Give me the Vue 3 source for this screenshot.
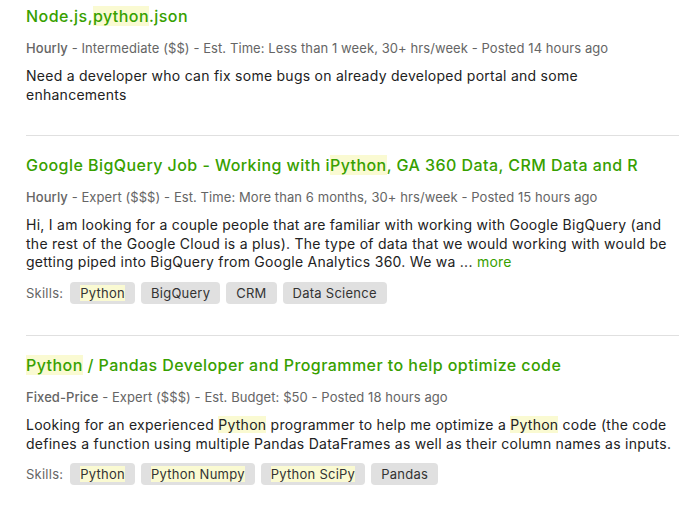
<script setup>
const jobs = [
  {
    title: [['Node.js,', false], ['python', true], ['.json', false]],
    type: 'Hourly',
    meta: ' - Intermediate ($$) - Est. Time: Less than 1 week, 30+ hrs/week - Posted 14 hours ago',
    desc: [['Need a developer who can fix some bugs on already developed portal and some enhancements', false]],
    skills: []
  },
  {
    title: [['Google BigQuery Job - Working with i', false], ['Python', true], [', GA 360 Data, CRM Data and R', false]],
    type: 'Hourly',
    meta: ' - Expert ($$$) - Est. Time: More than 6 months, 30+ hrs/week - Posted 15 hours ago',
    desc: [['Hi, I am looking for a couple people that are familiar with working with Google BigQuery (and the rest of the Google Cloud is a plus). The type of data that we would working with would be getting piped into BigQuery from Google Analytics 360. We wa ... ', false]],
    more: true,
    skills: [['Python', true], ['BigQuery', false], ['CRM', false], ['Data Science', false]]
  },
  {
    title: [['Python', true], [' / Pandas Developer and Programmer to help optimize code', false]],
    type: 'Fixed-Price',
    meta: ' - Expert ($$$) - Est. Budget: $50 - Posted 18 hours ago',
    desc: [['Looking for an experienced ', false], ['Python', true], [' programmer to help me optimize a ', false], ['Python', true], [' code (the code defines a function using multiple Pandas DataFrames as well as their column names as inputs.', false]],
    skills: [['Python', true], ['Python Numpy', true], ['Python SciPy', true], ['Pandas', false]]
  }
]
</script>

<template>
  <div class="list">
    <section v-for="(job, i) in jobs" :key="i" class="job">
      <h2 class="title"><template v-for="(p, k) in job.title" :key="k"><mark v-if="p[1]">{{ p[0] }}</mark><template v-else>{{ p[0] }}</template></template></h2>
      <p class="meta"><span class="type">{{ job.type }}</span>{{ job.meta }}</p>
      <p class="desc"><template v-for="(p, k) in job.desc" :key="k"><mark v-if="p[1]">{{ p[0] }}</mark><template v-else>{{ p[0] }}</template></template><a v-if="job.more" class="more">more</a></p>
      <div v-if="job.skills.length" class="skills">
        <span class="label">Skills:</span>
        <span v-for="(s, k) in job.skills" :key="k" class="tag"><mark v-if="s[1]">{{ s[0] }}</mark><template v-else>{{ s[0] }}</template></span>
      </div>
    </section>
  </div>
</template>

<style scoped>
.list { width: 653px; margin-left: 26px; font-family: Inter, "Open Sans", sans-serif; color: #37393a; }
.job { border-bottom: 1px solid #e0e0e0; padding-top: 5px; padding-bottom: 31px; margin-bottom: 13px; }
.job:last-child { border-bottom: 0; margin-bottom: 0; }
.title { margin: 0; font-size: 16px; line-height: 22px; font-weight: 500; color: #37a000; letter-spacing: 0.44px; }
mark { background: #fafad2; color: inherit; }
.meta { margin: 12px 0 0; font-size: 13px; line-height: 18px; color: #656565; letter-spacing: 0.08px; }
.type { font-weight: 500; }
.desc { margin: 10px 0 0; font-size: 14px; line-height: 18.6px; color: #222; letter-spacing: 0.26px; }
.more { color: #37a000; }
.skills { display: flex; align-items: center; gap: 6px; margin-top: 10px; font-size: 13px; letter-spacing: 0.25px; }
.label { color: #656565; margin-right: 1px; }
.tag { background: #e0e0e0; border-radius: 4px; padding: 0 10px; line-height: 22px; color: #333; }
</style>
